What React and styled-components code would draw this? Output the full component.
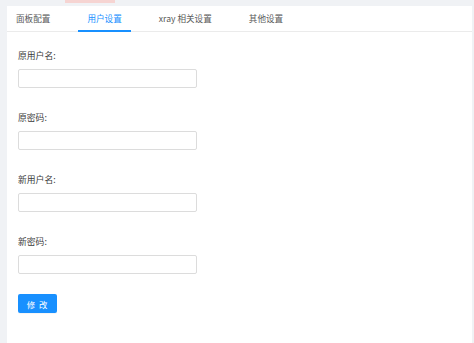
import React from 'react';
import styled, { createGlobalStyle } from 'styled-components';

const GlobalStyle = createGlobalStyle`
  html, body {
    margin: 0;
    padding: 0;
    background: #f0f2f5;
  }
  body {
    font-family: "Noto Sans CJK SC", "Noto Sans", sans-serif;
  }
`;

const Page = styled.div`
  min-height: 343px;
  padding: 0 2px 0 7px;
  box-sizing: border-box;
  display: flex;
  flex-direction: column;
`;

const TopStrip = styled.div`
  height: 6px;
  display: flex;
`;

const Peek = styled.div`
  margin-left: 58px;
  width: 50px;
  height: 3px;
  background: #f6d4d2;
`;

const Card = styled.div`
  flex: 1;
  background: #fff;
  min-height: 337px;
`;

const TabBar = styled.div`
  display: flex;
  gap: 19px;
  height: 25px;
  border-bottom: 1px solid #ebebeb;
`;

const Tab = styled.div`
  position: relative;
  padding: 0 9px;
  font-size: 8.6px;
  line-height: 25px;
  color: ${p => (p.active ? '#1890ff' : '#595959')};
  white-space: nowrap;

  &::after {
    content: '';
    display: ${p => (p.active ? 'block' : 'none')};
    position: absolute;
    left: 0;
    right: 0;
    bottom: -1px;
    height: 2px;
    background: #1890ff;
  }
`;

const Form = styled.div`
  padding: 18px 0 0 11px;
  display: flex;
  flex-direction: column;
  gap: 24px;
`;

const Field = styled.div`
  display: flex;
  flex-direction: column;
  gap: 7px;
`;

const Label = styled.label`
  font-size: 8.8px;
  line-height: 12px;
  color: #3a3a3a;
`;

const Input = styled.input`
  box-sizing: border-box;
  width: 179px;
  height: 19px;
  border: 1px solid #dcdcdc;
  border-radius: 2px;
  padding: 0 6px;
  font-size: 8px;
  outline: none;
  background: #fff;
`;

const ButtonRow = styled.div`
  display: flex;
  margin-top: -4px;
`;

const Button = styled.button`
  width: 39px;
  height: 19px;
  border: none;
  border-radius: 2px;
  background: #1890ff;
  color: #fff;
  font-family: inherit;
  font-size: 8.4px;
  letter-spacing: 1px;
  padding: 0;
  cursor: pointer;
  box-shadow: 0 1px 0 rgba(0, 0, 0, 0.04);
`;

const tabs = ['面板配置', '用户设置', 'xray 相关设置', '其他设置'];
const fields = ['原用户名:', '原密码:', '新用户名:', '新密码:'];

export default function App() {
  return (
    <>
      <GlobalStyle />
      <Page>
        <TopStrip>
          <Peek />
        </TopStrip>
        <Card>
          <TabBar>
            {tabs.map((t, i) => (
              <Tab key={t} active={i === 1}>
                {t}
              </Tab>
            ))}
          </TabBar>
          <Form>
            {fields.map(f => (
              <Field key={f}>
                <Label>{f}</Label>
                <Input type={f.includes('密码') ? 'password' : 'text'} />
              </Field>
            ))}
            <ButtonRow>
              <Button>修 改</Button>
            </ButtonRow>
          </Form>
        </Card>
      </Page>
    </>
  );
}
